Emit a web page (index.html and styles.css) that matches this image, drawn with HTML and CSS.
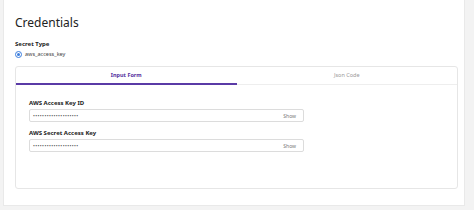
FILE: index.html
```html
<!DOCTYPE html>
<html lang="en">
<head>
    <meta charset="UTF-8">
    <title>Credentials</title>
    <link rel="stylesheet" href="styles.css">
</head>
<body>
    <div class="card">
        <div class="title">Credentials</div>
        <div class="label">Secret Type</div>
        <div class="radio-row">
            <span class="radio"></span>
            <span>aws_access_key</span>
        </div>
        <div class="tabs">
            <div class="tab-head">
                <div class="tab active">Input Form</div>
                <div class="tab">Json Code</div>
            </div>
            <div class="panel">
                <div class="field">
                    <div class="label">AWS Access Key ID</div>
                    <div class="input">
                        <span class="dots">••••••••••••••••••••</span>
                        <span class="show">Show</span>
                    </div>
                </div>
                <div class="field">
                    <div class="label">AWS Secret Access Key</div>
                    <div class="input">
                        <span class="dots">••••••••••••••••••••</span>
                        <span class="show">Show</span>
                    </div>
                </div>
            </div>
        </div>
    </div>
</body>
</html>
```

FILE: styles.css
```css
body{
    margin:0;
    background:#f3f3f3;
    font-family:"Noto Sans", "Open Sans", sans-serif;
    color:#333;
}
.card{
    margin:0 9px 0 3px;
    height:206px;
    box-sizing:border-box;
    background:#fff;
    border:1px solid #e9e9e9;
    border-top:none;
    padding:15px 6px 0 11px;
}
.title{
    font-size:12px;
    line-height:16px;
    color:#222;
}
.label{
    font-size:6px;
    line-height:8px;
    font-weight:bold;
    color:#222;
}
.card > .label{
    margin-top:9px;
}
.radio-row{
    display:flex;
    align-items:center;
    height:8px;
    margin-top:2px;
    font-size:5.5px;
    color:#444;
}
.radio{
    width:5px;
    height:5px;
    border:1px solid #3b7ddd;
    border-radius:50%;
    margin-right:3px;
    position:relative;
}
.radio::after{
    content:"";
    position:absolute;
    left:1px;
    top:1px;
    width:3px;
    height:3px;
    border-radius:50%;
    background:#3b7ddd;
}
.tabs{
    margin-top:8px;
    border:1px solid #e6e6e6;
    border-radius:3px;
    height:123px;
    box-sizing:border-box;
}
.tab-head{
    display:flex;
    border-bottom:1px solid #eeeeee;
}
.tab{
    flex:1;
    height:16px;
    line-height:16px;
    text-align:center;
    font-size:5.5px;
    color:#999;
}
.tab.active{
    color:#55309e;
    font-weight:bold;
    border-bottom:2px solid #5a3aa6;
    margin-bottom:-1px;
}
.panel{
    padding:14px 14px 0 13px;
}
.field{
    margin-bottom:7px;
}
.field .label{
    margin-bottom:2px;
}
.input{
    width:275px;
    height:13px;
    box-sizing:border-box;
    border:1px solid #dcdcdc;
    border-radius:2px;
    display:flex;
    align-items:center;
    justify-content:space-between;
    padding:0 7px 0 3px;
}
.dots{
    font-size:5px;
    letter-spacing:0.4px;
    color:#555;
}
.show{
    font-size:5px;
    color:#777;
}
```
